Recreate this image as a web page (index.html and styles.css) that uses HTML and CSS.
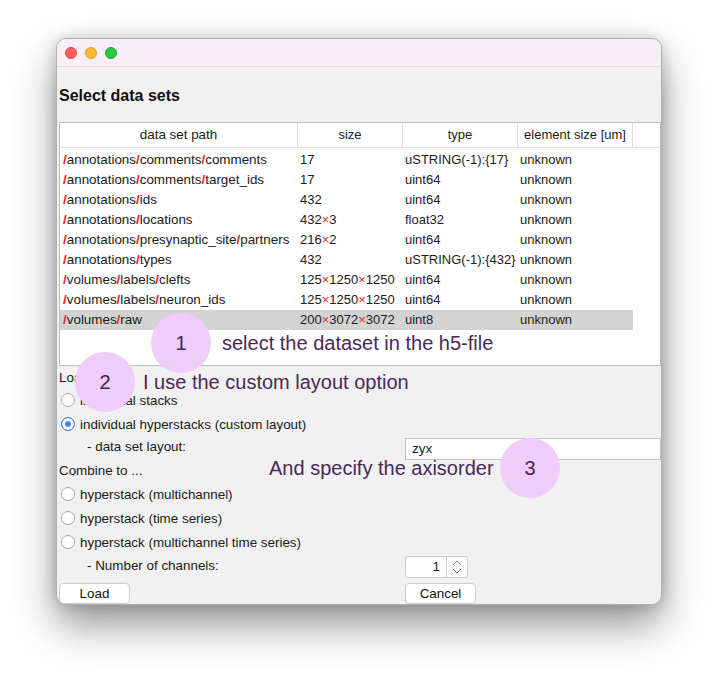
FILE: index.html
```html
<!DOCTYPE html>
<html>
<head>
<meta charset="utf-8">
<link rel="stylesheet" href="styles.css">
</head>
<body>
<div class="window">
  <div class="titlebar">
    <span class="dot red"></span><span class="dot yellow"></span><span class="dot green"></span>
  </div>
  <div class="content">
    <h1 class="heading">Select data sets</h1>
    <div class="table">
      <div class="row head">
        <div class="c c1">data set path</div>
        <div class="c c2">size</div>
        <div class="c c3">type</div>
        <div class="c c4">element size [um]</div>
        <div class="c c5"></div>
      </div>
      <div class="body">
        <div class="row"><div class="c c1"><i>/</i>annotations<i>/</i>comments<i>/</i>comments</div><div class="c c2">17</div><div class="c c3">uSTRING(-1):{17}</div><div class="c c4">unknown</div></div>
        <div class="row"><div class="c c1"><i>/</i>annotations<i>/</i>comments<i>/</i>target_ids</div><div class="c c2">17</div><div class="c c3">uint64</div><div class="c c4">unknown</div></div>
        <div class="row"><div class="c c1"><i>/</i>annotations<i>/</i>ids</div><div class="c c2">432</div><div class="c c3">uint64</div><div class="c c4">unknown</div></div>
        <div class="row"><div class="c c1"><i>/</i>annotations<i>/</i>locations</div><div class="c c2">432<b>×</b>3</div><div class="c c3">float32</div><div class="c c4">unknown</div></div>
        <div class="row"><div class="c c1"><i>/</i>annotations<i>/</i>presynaptic_site<i>/</i>partners</div><div class="c c2">216<b>×</b>2</div><div class="c c3">uint64</div><div class="c c4">unknown</div></div>
        <div class="row"><div class="c c1"><i>/</i>annotations<i>/</i>types</div><div class="c c2">432</div><div class="c c3">uSTRING(-1):{432}</div><div class="c c4">unknown</div></div>
        <div class="row"><div class="c c1"><i>/</i>volumes<i>/</i>labels<i>/</i>clefts</div><div class="c c2">125<b>×</b>1250<b>×</b>1250</div><div class="c c3">uint64</div><div class="c c4">unknown</div></div>
        <div class="row"><div class="c c1"><i>/</i>volumes<i>/</i>labels<i>/</i>neuron_ids</div><div class="c c2">125<b>×</b>1250<b>×</b>1250</div><div class="c c3">uint64</div><div class="c c4">unknown</div></div>
        <div class="row selected"><div class="c c1"><i>/</i>volumes<i>/</i>raw</div><div class="c c2">200<b>×</b>3072<b>×</b>3072</div><div class="c c3">uint8</div><div class="c c4">unknown</div></div>
      </div>
    </div>

    <div class="form">
      <div class="label-row">Load as ...</div>
      <div class="radio-row"><span class="radio"></span>individual stacks</div>
      <div class="radio-row"><span class="radio checked"></span>individual hyperstacks (custom layout)</div>
      <div class="field-row">
        <span class="sub-label">- data set layout:</span>
        <div class="textfield">zyx</div>
      </div>
      <div class="label-row combine">Combine to ...</div>
      <div class="radio-row"><span class="radio"></span>hyperstack (multichannel)</div>
      <div class="radio-row"><span class="radio"></span>hyperstack (time series)</div>
      <div class="radio-row"><span class="radio"></span>hyperstack (multichannel time series)</div>
      <div class="field-row channels">
        <span class="sub-label">- Number of channels:</span>
        <div class="spinner">
          <div class="spin-value">1</div>
          <div class="spin-arrows">
            <svg width="12" height="18" viewBox="0 0 12 18"><path d="M2 7 L6 3 L10 7" fill="none" stroke="#7a7a7a" stroke-width="1"/><path d="M2 11 L6 15 L10 11" fill="none" stroke="#7a7a7a" stroke-width="1"/></svg>
          </div>
        </div>
      </div>
      <div class="button-row">
        <div class="btn load">Load</div>
        <div class="btn cancel">Cancel</div>
      </div>
    </div>
  </div>

  <div class="bubble b1">1</div>
  <div class="note n1">select the dataset in the h5-file</div>
  <div class="bubble b2">2</div>
  <div class="note n2">I use the custom layout option</div>
  <div class="bubble b3">3</div>
  <div class="note n3">And specify the axisorder</div>
</div>
</body>
</html>
```
FILE: styles.css
```css
html, body {
  margin: 0;
  padding: 0;
  background: #ffffff;
}
body {
  padding: 38px 0 0 56px;
  min-height: 679px;
  box-sizing: border-box;
  font-family: "Liberation Sans", Arial, sans-serif;
  font-size: 13.4px;
  color: #1a1a1a;
}
.window {
  position: relative;
  width: 606px;
  height: 567px;
  box-sizing: border-box;
  background: #f1f1f1;
  border-radius: 10px;
  border: 1px solid #b0b0b0;
  box-shadow: 0 20px 40px rgba(0,0,0,0.42), 0 0 14px rgba(0,0,0,0.18);
  overflow: hidden;
}
.titlebar {
  height: 27px;
  background: #f7eff5;
  border-bottom: 1px solid #dedade;
  display: flex;
  align-items: center;
  padding-left: 8px;
  gap: 8px;
}
.dot {
  width: 12px;
  height: 12px;
  border-radius: 50%;
  box-sizing: border-box;
}
.dot.red { background: #fe5f57; border: 1px solid #e2463f; }
.dot.yellow { background: #febc2e; border: 1px solid #e0a027; }
.dot.green { background: #28c840; border: 1px solid #1ea932; }

.content {
  padding: 0 0 0 2px;
}
.heading {
  margin: 20px 0 0 0;
  height: 17px;
  line-height: 17px;
  font-size: 16px;
  font-weight: bold;
  color: #111;
}
.table {
  margin-top: 18px;
  width: 602px;
  height: 244px;
  box-sizing: border-box;
  background: #ffffff;
  border: 1px solid #bdbdbd;
}
.row {
  display: flex;
  height: 20px;
  line-height: 20px;
}
.row.head {
  height: 24px;
  line-height: 24px;
  border-bottom: 1px solid #dcdcdc;
}
.row.head .c {
  text-align: center;
  border-right: 1px solid #dcdcdc;
  padding: 0;
}
.row.head .c5 { border-right: none; }
.body { padding-top: 2px; }
.c {
  box-sizing: border-box;
  white-space: nowrap;
  overflow: hidden;
  padding-left: 3px;
}
.c1 { width: 238px; }
.c2 { width: 105px; }
.c3 { width: 115px; }
.c4 { width: 115px; }
.c5 { width: 27px; }
.row .c2, .row .c3, .row .c4 { padding-left: 2px; font-size: 13px; }
.row.head .c { padding-left: 0; }
.c i {
  font-style: normal;
  font-weight: bold;
  color: #ec1c24;
}
.c b {
  font-weight: normal;
  color: #ec1c24;
}
.row.selected {
  background: #d3d3d3;
  width: 573px;
}

.form {
  display: flex;
  flex-direction: column;
}
.label-row {
  height: 22px;
  line-height: 24px;
}
.label-row.combine {
  height: 22px;
  line-height: 22px;
}
.radio-row {
  height: 24px;
  display: flex;
  align-items: center;
  gap: 5px;
  padding-left: 2px;
}
.radio {
  width: 14px;
  height: 14px;
  box-sizing: border-box;
  border-radius: 50%;
  background: #ffffff;
  border: 1px solid #a9a9a9;
}
.radio.checked {
  background: #3d8ee8;
  border: 1px solid #3a85d6;
  box-shadow: inset 0 0 0 3px #ffffff;
}
.field-row {
  height: 24px;
  display: flex;
  align-items: center;
}
.sub-label {
  width: 346px;
  padding-left: 28px;
  box-sizing: border-box;
  margin-bottom: 4px;
}
.textfield {
  width: 256px;
  height: 22px;
  box-sizing: border-box;
  margin-top: 2px;
  background: #ffffff;
  border: 1px solid #c4c4c4;
  padding-left: 6px;
  line-height: 20px;
}
.field-row.channels {
  height: 26px;
}
.channels .sub-label { margin-bottom: 4px; }
.spinner {
  display: flex;
  height: 22px;
  width: 63px;
}
.spin-value {
  width: 42px;
  box-sizing: border-box;
  background: #fff;
  border: 1px solid #cfcfcf;
  border-radius: 3px 0 0 3px;
  text-align: right;
  padding-right: 6px;
  line-height: 20px;
}
.spin-arrows {
  width: 21px;
  box-sizing: border-box;
  background: #fff;
  border: 1px solid #cfcfcf;
  border-left: none;
  border-radius: 0 3px 3px 0;
  display: flex;
  align-items: center;
  justify-content: center;
}
.button-row {
  display: flex;
  height: 22px;
  margin-top: 3px;
}
.btn {
  height: 21px;
  width: 71px;
  box-sizing: border-box;
  background: #ffffff;
  border: 1px solid #cdcdcd;
  border-radius: 4px;
  text-align: center;
  line-height: 19px;
  color: #111;
}
.btn.cancel {
  margin-left: 275px;
}

.bubble {
  position: absolute;
  width: 60px;
  height: 60px;
  border-radius: 50%;
  background: #f0ccfb;
  color: #45264f;
  font-size: 20px;
  display: flex;
  align-items: center;
  justify-content: center;
}
.b1 { left: 94px; top: 274px; }
.b2 { left: 18px; top: 313px; }
.b3 { left: 443px; top: 399px; }
.note {
  position: absolute;
  color: #4a2a58;
  font-size: 20px;
  line-height: 22px;
  white-space: nowrap;
}
.n1 { left: 165px; top: 293px; }
.n2 { left: 86px; top: 332px; }
.n3 { left: 212px; top: 418px; }
```
